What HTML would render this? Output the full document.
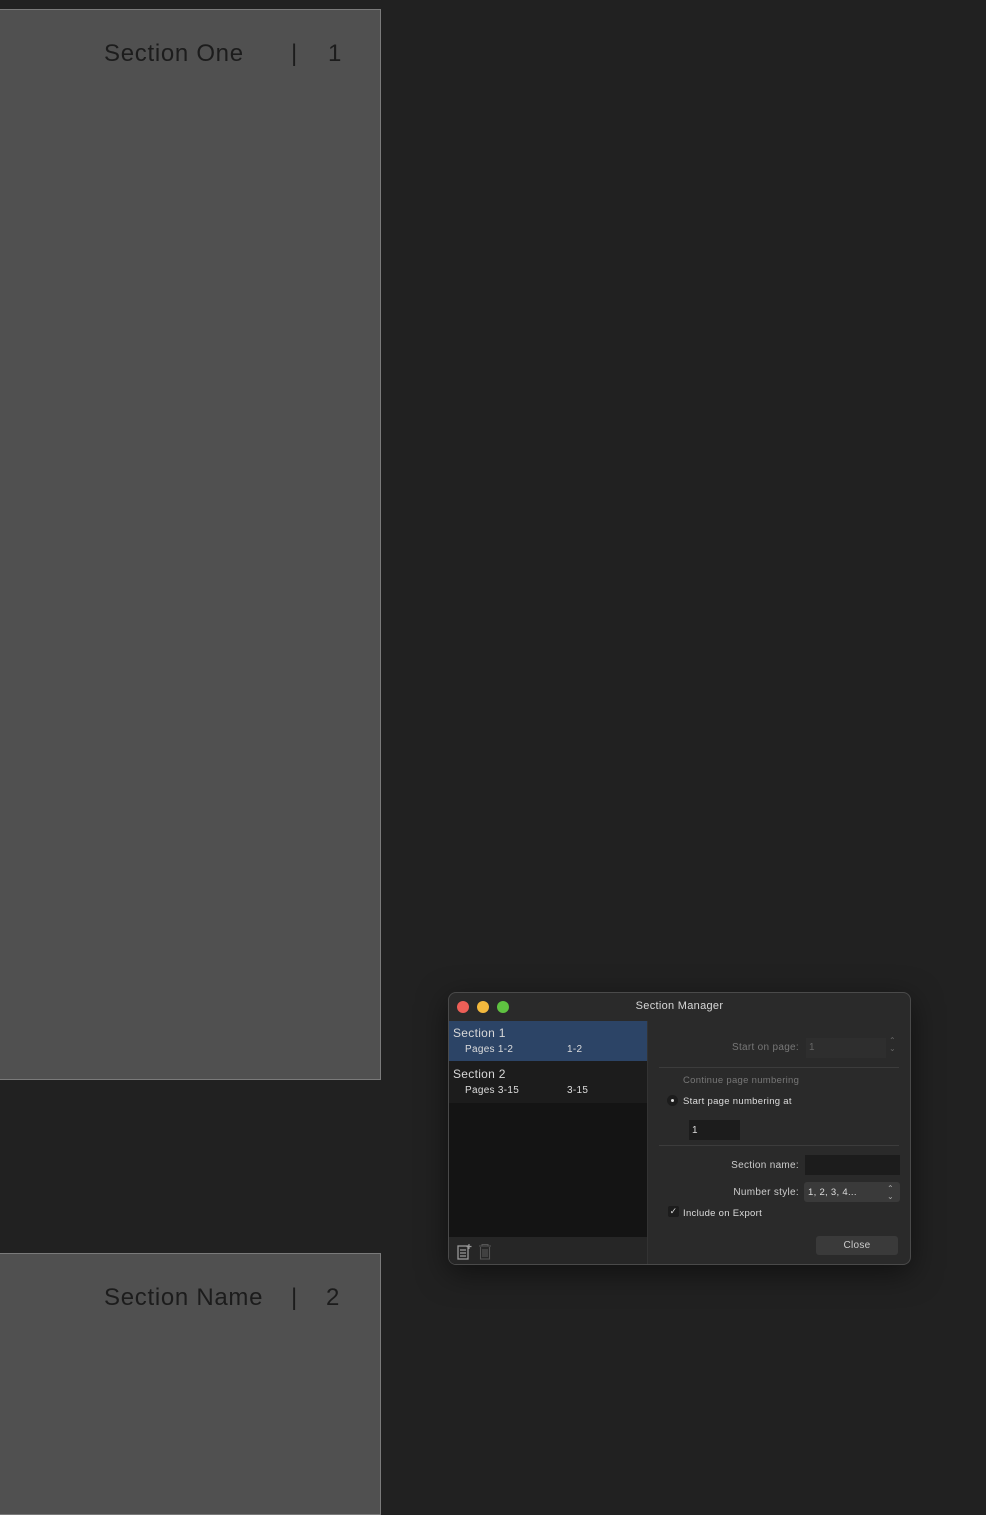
<!DOCTYPE html>
<html><head><style>
body{margin:0;width:986px;height:1500px;background:#212121;position:relative;overflow:hidden;font-family:"Liberation Sans",sans-serif}
.pg{position:absolute;left:-2px;width:381px;background:#505050;border:1px solid #7a7a7a}
.hd{position:absolute;font-size:24px;color:#1c1c1c;font-weight:300;letter-spacing:0.7px}
.a{position:absolute}
.dlg{position:absolute;left:448px;top:992px;width:461px;height:271px;border:1px solid #4a4a4a;border-radius:8px;background:#2a2a2a;overflow:hidden;box-shadow:0 8px 30px rgba(0,0,0,.5);letter-spacing:0.3px}
.t{font-size:11px;color:#d8d8d8}
.g{font-size:10px;color:#888}
.w{font-size:10px;color:#ddd}
.r{text-align:right;width:140px}
</style></head><body>
<div class="pg" style="top:9px;height:1069px"></div>
<div class="hd" style="left:104px;top:40px">Section One</div>
<div class="hd" style="left:291px;top:40px">|</div>
<div class="hd" style="left:328px;top:40px">1</div>
<div class="pg" style="top:1253px;height:260px"></div>
<div class="hd" style="left:104px;top:1284px">Section Name</div>
<div class="hd" style="left:291px;top:1284px">|</div>
<div class="hd" style="left:326px;top:1284px">2</div>

<div class="dlg">
 <div class="a" style="left:8px;top:8px;width:12px;height:12px;border-radius:6px;background:#ed5f57"></div>
 <div class="a" style="left:28px;top:8px;width:12px;height:12px;border-radius:6px;background:#f4b93d"></div>
 <div class="a" style="left:48px;top:8px;width:12px;height:12px;border-radius:6px;background:#5fc241"></div>
 <div class="a t" style="left:0;width:461px;text-align:center;top:7px;font-size:11px">Section Manager</div>
 <div class="a" style="left:0;top:28px;width:198px;height:243px;background:#141414"></div>
 <div class="a" style="left:0;top:28px;width:198px;height:40px;background:#2c4466"></div>
 <div class="a" style="left:0;top:68px;width:198px;height:42px;background:#1c1c1c"></div>
 <div class="a t" style="left:4px;top:33px;font-size:12px">Section 1</div>
 <div class="a w" style="left:16px;top:51px">Pages 1-2</div>
 <div class="a w" style="left:118px;top:51px">1-2</div>
 <div class="a t" style="left:4px;top:74px;font-size:12px">Section 2</div>
 <div class="a w" style="left:16px;top:92px">Pages 3-15</div>
 <div class="a w" style="left:118px;top:92px">3-15</div>
 <div class="a" style="left:0;top:244px;width:198px;height:27px;background:#262626"></div>
 <div class="a" style="left:198px;top:28px;width:1px;height:243px;background:#333"></div>
 <svg class="a" style="left:8px;top:250px" width="16" height="18"><rect x="1" y="3" width="10" height="13" fill="none" stroke="#999" stroke-width="1.3"/><path d="M3 7h6M3 10h6M3 13h6M12 1v5M9.5 3.5h5" stroke="#999" stroke-width="1.2"/></svg>
 <svg class="a" style="left:29px;top:250px" width="14" height="18"><path d="M1 3h12M4 3V1.5h6V3M2.5 4v12h9V4M5 6v8M7 6v8M9 6v8" stroke="#555" fill="none" stroke-width="1.1"/></svg>
 <div class="a g r" style="left:210px;top:49px;color:#777">Start on page:</div>
 <div class="a" style="left:357px;top:45px;width:80px;height:20px;background:#2e2e2e"></div>
 <div class="a g" style="left:360px;top:49px;color:#666">1</div>
 <div class="a g" style="left:440px;top:44px;font-size:8px;color:#666;line-height:8px">⌃<br>⌄</div>
 <div class="a" style="left:210px;top:74px;width:240px;height:1px;background:#3c3c3c"></div>
 <div class="a g" style="left:234px;top:82px;font-size:9.5px;color:#777">Continue page numbering</div>
 <div class="a" style="left:218px;top:102px;width:11px;height:11px;border-radius:6px;background:#1c1c1c"></div>
 <div class="a" style="left:222px;top:106px;width:3px;height:3px;border-radius:2px;background:#ddd"></div>
 <div class="a w" style="left:234px;top:103px;font-size:9.5px">Start page numbering at</div>
 <div class="a" style="left:240px;top:127px;width:51px;height:20px;background:#1c1c1c"></div>
 <div class="a w" style="left:243px;top:132px">1</div>
 <div class="a" style="left:210px;top:152px;width:240px;height:1px;background:#3c3c3c"></div>
 <div class="a w r" style="left:210px;top:167px;color:#ccc">Section name:</div>
 <div class="a" style="left:356px;top:162px;width:95px;height:20px;background:#1c1c1c"></div>
 <div class="a w r" style="left:210px;top:194px;color:#ccc">Number style:</div>
 <div class="a" style="left:355px;top:189px;width:96px;height:20px;background:#3a3a3a;border-radius:3px"></div>
 <div class="a w" style="left:359px;top:194px;font-size:9.5px">1, 2, 3, 4...</div>
 <div class="a g" style="left:438px;top:192px;font-size:8px;color:#aaa;line-height:8px">⌃<br>⌄</div>
 <div class="a" style="left:219px;top:213px;width:11px;height:11px;border-radius:2px;background:#1c1c1c;color:#ddd;font-size:9px;line-height:11px;text-align:center">✓</div>
 <div class="a w" style="left:234px;top:215px;font-size:9.5px">Include on Export</div>
 <div class="a" style="left:367px;top:243px;width:82px;height:19px;background:#3a3a3a;border-radius:3px;color:#ccc;font-size:10px;text-align:center;line-height:19px">Close</div>
</div>
</body></html>
